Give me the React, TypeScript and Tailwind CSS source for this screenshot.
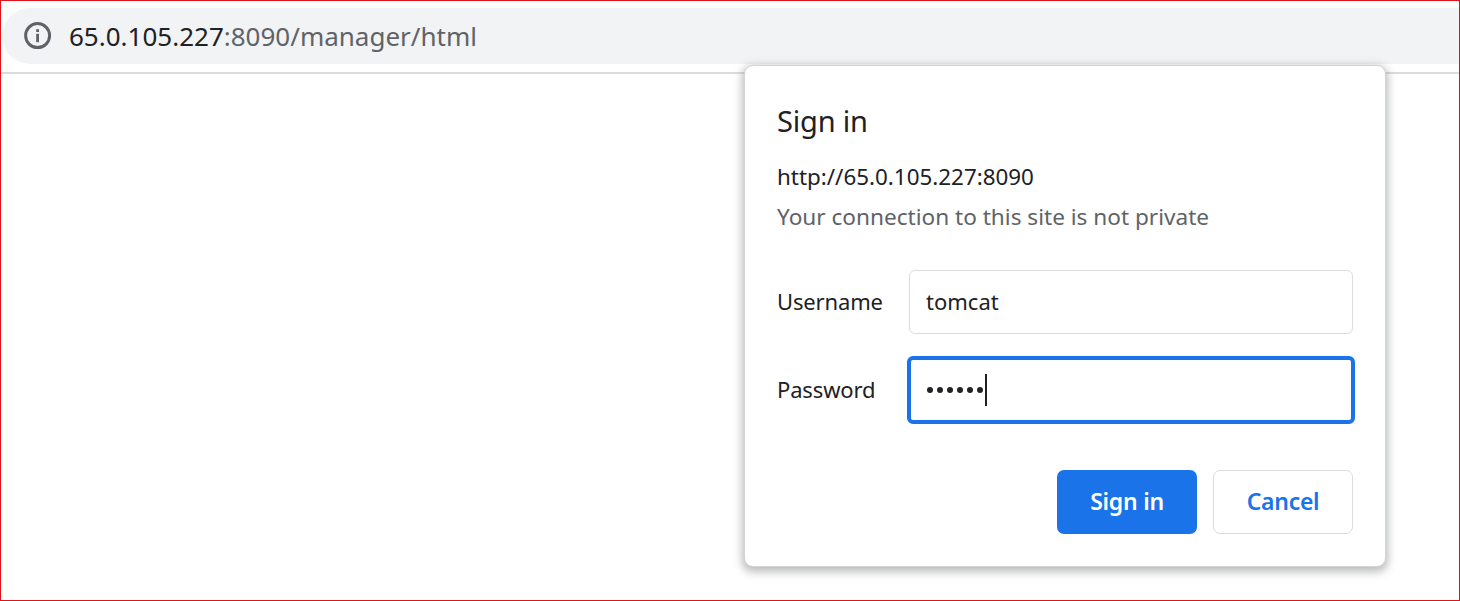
const font = "font-['Noto_Sans','Open_Sans',sans-serif]";

export default function App() {
  return (
    <div className={`relative h-[601px] w-[1460px] overflow-hidden border border-[#e0131a] bg-white ${font}`}>
      {/* toolbar */}
      <div className="h-[73px] border-b-2 border-[#dadce0] pt-[7px]">
        <div className="ml-px flex h-[56px] items-center rounded-l-[28px] bg-[#f1f3f4] pl-[21px]">
          <svg width="30" height="30" viewBox="0 0 30 30" className="shrink-0">
            <circle cx="14.6" cy="14.6" r="12" fill="none" stroke="#5f6368" strokeWidth="3" />
            <rect x="13.2" y="8.2" width="2.8" height="2.8" fill="#5f6368" />
            <rect x="13.2" y="12.8" width="2.8" height="8.4" fill="#5f6368" />
          </svg>
          <div className="ml-[16px] text-[26px] leading-none text-[#5f6368]">
            <span className="text-[#202124]">65.0.105.227</span>:8090/manager/html
          </div>
        </div>
      </div>

      {/* sign in dialog */}
      <div className="absolute left-[743px] top-[64px] h-[502px] w-[642px] rounded-[9px] border border-[#d4d4d4] bg-white pl-[32px] pr-[32px] pt-[36px] shadow-[0_3px_9px_2px_rgba(60,64,67,0.35)]">
        <h1 className="text-[29px] leading-[38px] tracking-[-0.2px] text-[#202124]">Sign in</h1>
        <p className="mt-[20px] text-[22.4px] leading-[34px] text-[#202124]">http://65.0.105.227:8090</p>
        <p className="mt-[6px] text-[22.6px] leading-[34px] text-[#5f6368]">Your connection to this site is not private</p>

        <div className="mt-[36px] flex items-center">
          <label className="w-[132px] pb-[2px] text-[22px] tracking-[-0.15px] text-[#202124]">Username</label>
          <div className="flex h-[64px] w-[444px] items-center rounded-[6px] border border-[#dadce0] pb-[2px] pl-[16px] text-[22px] text-[#202124]">tomcat</div>
        </div>
        <div className="mt-[22px] flex items-center">
          <label className="w-[130px] shrink-0 pb-[1px] text-[22px] tracking-[-0.15px] text-[#202124]">Password</label>
          <div className="flex h-[68px] w-[448px] shrink-0 items-center rounded-[6px] border-[4px] border-[#1a73e8] pl-[16px]">
            <div className="flex items-center gap-[4px]">
              <span className="size-[6px] rounded-full bg-[#202124]"></span>
              <span className="size-[6px] rounded-full bg-[#202124]"></span>
              <span className="size-[6px] rounded-full bg-[#202124]"></span>
              <span className="size-[6px] rounded-full bg-[#202124]"></span>
              <span className="size-[6px] rounded-full bg-[#202124]"></span>
              <span className="size-[6px] rounded-full bg-[#202124]"></span>
            </div>
            <span className="ml-[2px] h-[32px] w-[2px] bg-[#202124]"></span>
          </div>
        </div>

        <div className="mt-[46px] flex justify-end gap-[16px]">
          <button className="h-[64px] w-[140px] rounded-[7px] bg-[#1a73e8] pb-[1px] text-[23px] font-semibold tracking-[-0.25px] text-white">Sign in</button>
          <button className="h-[64px] w-[140px] rounded-[7px] border border-[#dadce0] bg-white pb-[1px] text-[23px] font-semibold tracking-[-0.3px] text-[#1a73e8]">Cancel</button>
        </div>
      </div>
    </div>
  );
}
